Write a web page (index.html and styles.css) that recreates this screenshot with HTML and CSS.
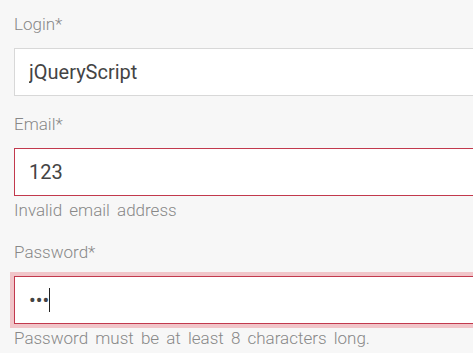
FILE: index.html
```html
<!DOCTYPE html>
<html lang="en">
<head>
<meta charset="utf-8">
<title>Form validation</title>
<link rel="stylesheet" href="styles.css">
</head>
<body>
<form class="form">
  <div class="group">
    <label class="label" for="login">Login*</label>
    <input class="field" id="login" type="text" value="jQueryScript">
  </div>
  <div class="group">
    <label class="label" for="email">Email*</label>
    <input class="field field-invalid" id="email" type="text" value="123">
    <div class="error">Invalid email address</div>
  </div>
  <div class="group">
    <label class="label" for="password">Password*</label>
    <div class="field-wrap">
      <input class="field field-invalid field-focus" id="password" type="password" value="123">
      <span class="caret"></span>
    </div>
    <div class="error">Password must be at least 8 characters long.</div>
  </div>
</form>
</body>
</html>
```
FILE: styles.css
```css
html, body {
  margin: 0;
  padding: 0;
  overflow: clip;
  background: #f7f7f7;
}
body {
  font-family: Roboto, "Liberation Sans", sans-serif;
}
.form {
  padding: 12px 0 0 14px;
}
.group {
  margin-bottom: 16px;
}
.label {
  display: block;
  font-size: 17px;
  line-height: 24px;
  font-weight: 300;
  word-spacing: 3px;
  color: #888;
  margin-bottom: 12px;
}
.field-wrap {
  position: relative;
  width: 580px;
}
.field {
  display: block;
  box-sizing: border-box;
  width: 580px;
  height: 48px;
  margin: 0;
  padding: 0 14px;
  border: 1px solid #d8d8d8;
  border-radius: 0;
  background: #fff;
  font-family: Roboto, "Liberation Sans", sans-serif;
  font-size: 20px;
  color: #444;
  outline: none;
}
.field-invalid {
  border-color: #c2394d;
}
.field-focus {
  box-shadow: 0 0 0 4px #f1c5c9;
}
.caret {
  position: absolute;
  left: 35px;
  top: 12px;
  width: 1px;
  height: 24px;
  background: #222;
}
.error {
  font-size: 17px;
  line-height: 28px;
  font-weight: 300;
  word-spacing: 3px;
  color: #888;
}
```
